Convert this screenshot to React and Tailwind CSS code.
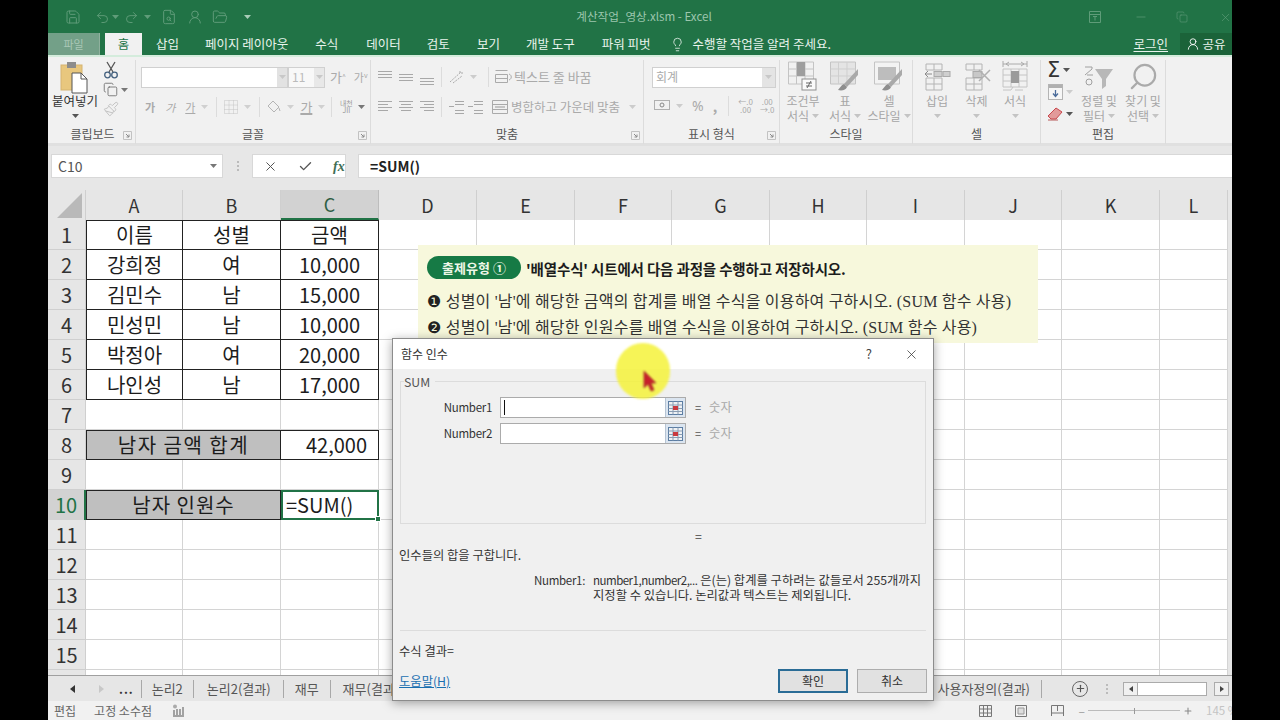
import { Save, Undo2, Redo2, FileSearch, FolderOpen, Lightbulb, UserRound, Minus, X, Check, Plus, Search, Copy, Paintbrush } from "lucide-react";

const KR = "font-['Noto_Sans_CJK_KR',sans-serif]";

const columns = ["A", "B", "C", "D", "E", "F", "G", "H", "I", "J", "K", "L"];
const rowNumbers = [1, 2, 3, 4, 5, 6, 7, 8, 9, 10, 11, 12, 13, 14, 15, 16];

const tableRows = {
	1: ["이름", "성별", "금액"],
	2: ["강희정", "여", "10,000"],
	3: ["김민수", "남", "15,000"],
	4: ["민성민", "남", "10,000"],
	5: ["박정아", "여", "20,000"],
	6: ["나인성", "남", "17,000"],
};

// Tiny dropdown triangle used all over the ribbon
function Caret({ color = "#9a9a9a", className = "" }) {
	return (
		<svg width="7" height="4" viewBox="0 0 7 4" className={className}>
			<path d="M0 0h7L3.5 4z" fill={color} />
		</svg>
	);
}

function Lines({ widths, gap = 4, color = "#a8a8a8" }) {
	return (
		<svg width="16" height="16" viewBox="0 0 16 16">
			{widths.map((w, i) => (
				<rect key={i} x={w[0]} y={w[2] ?? 2 + i * gap} width={w[1]} height="1" fill={color} />
			))}
		</svg>
	);
}

function Launcher() {
	return (
		<svg width="9" height="9" viewBox="0 0 9 9" className="absolute right-[3px] bottom-[4px]">
			<path d="M.5.5h8v8h-8z" fill="none" stroke="#c2c2c2" />
			<path d="M3 3l3 3M6 3.500V6H3.500" fill="none" stroke="#8a8a8a" />
		</svg>
	);
}

function Group({ width, label, children }) {
	return (
		<div className={`${width} relative flex flex-col shrink-0 border-r border-[#dcdcdc] h-[84px] mt-[3px]`}>
			<div className="flex-1 min-h-0">{children}</div>
			<div className="h-[16px] mb-[2px] text-center text-[12px] leading-[15px] text-[#555]">{label}</div>
		</div>
	);
}

function BigButton({ width, icon, top, bottom, caretOnly }) {
	return (
		<div className={`${width} flex flex-col items-center`}>
			<div className="h-[33px] flex items-center justify-center">{icon}</div>
			<div className="text-[12px] leading-[15px] text-[#a6a6a6] whitespace-nowrap">{top}</div>
			{caretOnly ? (
				<Caret className="mt-[6px]" color="#c4c4c4" />
			) : (
				<div className="text-[12px] leading-[15px] text-[#a6a6a6] whitespace-nowrap flex items-center gap-[3px]">
					{bottom}
					<Caret color="#c4c4c4" />
				</div>
			)}
		</div>
	);
}

function GridGlyph({ children }) {
	return (
		<svg width="30" height="32" viewBox="0 0 30 32">
			{children}
		</svg>
	);
}

function Ribbon() {
	const grey = "text-[#aaa]";
	return (
		<div className={`h-[88px] bg-[#f1f1f1] border-t-2 border-[#d4ecdc] flex pl-[2px] ${KR}`}>
			{/* Clipboard */}
			<Group width="w-[86px]" label="클립보드">
				<div className="flex">
					<div className="w-[50px] flex flex-col items-center">
						<svg width="30" height="32" viewBox="0 0 30 32" className="mt-[2px]">
							<rect x="1" y="3" width="21" height="25" fill="#e8c77e" stroke="#d5b470" />
							<rect x="7" y="0" width="9" height="6" fill="#8d8d8d" />
							<path d="M12 11h9l6 6v14H12z" fill="#fff" stroke="#555" />
							<path d="M21 11v6h6" fill="none" stroke="#555" />
						</svg>
						<div className="text-[12.5px] leading-[14px] text-[#333] whitespace-nowrap">붙여넣기</div>
						<Caret className="mt-[6px]" color="#555" />
					</div>
					<div className="flex flex-col items-start gap-[3px] ml-[3px] mt-[1px]">
						<svg width="16" height="18" viewBox="0 0 16 18">
							<path d="M4 1l6 10M12 1L6 11" fill="none" stroke="#555" strokeWidth="1.300" />
							<circle cx="4.500" cy="14" r="2.800" fill="none" stroke="#44617f" strokeWidth="1.300" />
							<circle cx="11.500" cy="14" r="2.800" fill="none" stroke="#44617f" strokeWidth="1.300" />
						</svg>
						<div className="flex items-center gap-[3px]">
							<Copy size={15} strokeWidth={1.3} color="#666" />
							<Caret color="#777" />
						</div>
						<Paintbrush size={16} strokeWidth={1.5} color="#c4c4c4" className="mt-[1px]" />
					</div>
				</div>
				<Launcher />
			</Group>

			{/* Font */}
			<Group width="w-[235px]" label="글꼴">
				<div className="flex items-center pl-[5px] pt-[5px] h-[29px]">
					<div className="w-[147px] h-[21px] bg-white border border-[#d0d0d0] flex justify-end">
						<div className="w-[10px] bg-[#e2e2e2] flex items-center justify-center">
							<Caret color="#c8c8c8" />
						</div>
					</div>
					<div className="w-[37px] h-[21px] bg-[#f8f8f8] border border-[#d0d0d0] flex items-center justify-between pl-[3px] text-[12px] text-[#bbb]">
						11
						<div className="w-[10px] h-full bg-[#e8e8e8] flex items-center justify-center">
							<Caret color="#c8c8c8" />
						</div>
					</div>
					<span className={`ml-[5px] text-[13px] ${grey}`}>가<sup className="text-[7px]">^</sup></span>
					<span className={`ml-[8px] text-[11px] ${grey}`}>가<sup className="text-[7px]">v</sup></span>
				</div>
				<div className={`flex items-center pl-[9px] pt-[8px] text-[11px] ${grey}`}>
					<span className="font-bold">가</span>
					<span className="ml-[10px] italic">가</span>
					<span className="ml-[10px] underline">가</span>
					<Caret className="ml-[6px]" color="#d0d0d0" />
					<div className="w-px h-[20px] bg-[#dcdcdc] ml-[8px]" />
					<svg width="14" height="14" viewBox="0 0 14 14" className="ml-[7px]">
						<path d="M.5.5h13v13H.5zM5 .5v13M9.500.5v13M.5 5h13M.5 9.500h13" fill="none" stroke="#c4c4c4" strokeDasharray="1 1" />
					</svg>
					<Caret className="ml-[6px]" color="#d0d0d0" />
					<div className="w-px h-[20px] bg-[#dcdcdc] ml-[8px]" />
					<svg width="16" height="16" viewBox="0 0 16 16" className="ml-[6px]">
						<path d="M7 2l6 6-5 5-6-6zM13 9l1 3" fill="none" stroke="#b4b4b4" />
					</svg>
					<Caret className="ml-[5px]" color="#d0d0d0" />
					<span className="ml-[6px] underline decoration-2 text-[13px]">가</span>
					<Caret className="ml-[6px]" color="#d0d0d0" />
					<div className="w-px h-[20px] bg-[#dcdcdc] ml-[6px]" />
					<span className="ml-[7px] text-[7px] leading-[7px] w-[14px] text-center text-[#999]">내천 JII</span>
					<Caret className="ml-[5px]" color="#777" />
				</div>
				<Launcher />
			</Group>

			{/* Alignment */}
			<Group width="w-[273px]" label="맞춤">
				<div className="flex items-center pl-[6px] pt-[5px] h-[29px]">
					<div className="flex gap-[5px]">
						<Lines widths={[[1, 14], [1, 14], [1, 14]]} gap={3} />
						<Lines widths={[[1, 14, 5], [1, 14, 8], [1, 14, 11]]} />
						<Lines widths={[[1, 14, 9], [1, 14, 12], [1, 14, 15]]} />
					</div>
					<div className="w-px h-[20px] bg-[#dcdcdc] ml-[6px]" />
					<svg width="20" height="16" viewBox="0 0 20 16" className="ml-[6px]">
						<path d="M2 13L13 3M11 3h3v3M5 14l9-7" fill="none" stroke="#aaa" strokeDasharray="2 1" />
					</svg>
					<Caret className="ml-[2px]" color="#ccc" />
					<div className="w-px h-[20px] bg-[#dcdcdc] ml-[11px]" />
					<svg width="18" height="17" viewBox="0 0 18 17" className="ml-[6px]">
						<path d="M.5 1.500h12M.5 5.500h12v8H.5zM.5 9.500h12" fill="none" stroke="#aaa" />
						<path d="M14 5c3 1 3 5 0 6" fill="none" stroke="#aaa" />
					</svg>
					<span className={`ml-[1px] text-[13px] whitespace-nowrap ${grey}`}>텍스트 줄 바꿈</span>
				</div>
				<div className="flex items-center pl-[6px] pt-[8px]">
					<div className="flex gap-[5px]">
						<Lines widths={[[1, 14], [1, 10], [1, 14], [1, 10]]} gap={3} />
						<Lines widths={[[1, 14], [3, 10], [1, 14], [3, 10]]} gap={3} />
						<Lines widths={[[1, 14], [5, 10], [1, 14], [5, 10]]} gap={3} />
					</div>
					<div className="w-px h-[20px] bg-[#dcdcdc] ml-[6px]" />
					<div className="flex gap-[3px] ml-[6px]">
						<Lines widths={[[7, 9], [7, 9], [1, 5, 7], [7, 9], [7, 9]]} gap={3} />
						<Lines widths={[[7, 9], [7, 9], [1, 5, 7], [7, 9], [7, 9]]} gap={3} />
					</div>
					<svg width="16" height="16" viewBox="0 0 16 16" className="ml-[9px]">
						<path d="M.5 1.500h15v13H.5zM.5 5.500h15M.5 10.500h15" fill="none" stroke="#aaa" />
						<path d="M3 8h10" stroke="#999" />
					</svg>
					<span className={`ml-[3px] text-[12.5px] whitespace-nowrap ${grey}`}>병합하고 가운데 맞춤</span>
					<Caret className="ml-[9px]" color="#ccc" />
				</div>
				<Launcher />
			</Group>

			{/* Number */}
			<Group width="w-[136px]" label="표시 형식">
				<div className="flex items-center pl-[8px] pt-[5px] h-[29px]">
					<div className="w-[124px] h-[21px] bg-white border border-[#d0d0d0] flex items-center justify-between pl-[3px] text-[12px] text-[#aaa]">
						회계
						<div className="w-[13px] h-full bg-[#e4e4e4] flex items-center justify-center">
							<Caret color="#c8c8c8" />
						</div>
					</div>
				</div>
				<div className="flex items-center pl-[10px] pt-[7px] text-[#aaa]">
					<svg width="16" height="13" viewBox="0 0 16 13">
						<rect x=".5" y=".5" width="15" height="9" fill="none" stroke="#b0b0b0" />
						<circle cx="8" cy="5" r="2" fill="none" stroke="#888" />
					</svg>
					<Caret className="ml-[6px]" color="#ccc" />
					<span className="ml-[9px] text-[14px] leading-[18px] font-['Noto_Sans',sans-serif]">%</span>
					<span className="ml-[9px] text-[14px] leading-[14px] font-bold">,</span>
					<div className="w-px h-[20px] bg-[#dcdcdc] ml-[11px]" />
					<span className="ml-[9px] text-[8px] leading-[8px] text-center whitespace-pre">{"←.0\n.00"}</span>
					<span className="ml-[7px] text-[8px] leading-[8px] text-center whitespace-pre">{".00\n→.0"}</span>
				</div>
				<Launcher />
			</Group>

			{/* Styles */}
			<Group width="w-[133px]" label="스타일">
				<div className="flex pl-[2px]">
					<BigButton
						width="w-[42px]"
						top="조건부"
						bottom="서식"
						icon={
							<GridGlyph>
								<path d="M.5 1h25v22H.5zM8.500 1v22M17 1v22M.5 8h25M.5 15h25" fill="none" stroke="#c4c4c4" />
								<rect x="9" y="1" width="8" height="14" fill="#9e9e9e" />
								<rect x="14" y="18" width="14" height="11" fill="#fafafa" stroke="#8f8f8f" />
								<path d="M18 22h6M18 25h6M23 20l-4 7" stroke="#666" fill="none" />
							</GridGlyph>
						}
					/>
					<BigButton
						width="w-[42px]"
						top="표"
						bottom="서식"
						icon={
							<GridGlyph>
								<path d="M.5 1h25v22H.5z" fill="#e4e4e4" stroke="#c4c4c4" />
								<path d="M.5 8h25M.5 15h25M8.500 1v22M17 1v22" stroke="#cfcfcf" />
								<path d="M28 8L14 23l3 3 11-12z" fill="#a9a9a9" />
								<path d="M14 23c-3 1-4 4-6 6 4 1 8 0 9-3z" fill="#8e8e8e" />
							</GridGlyph>
						}
					/>
					<BigButton
						width="w-[46px]"
						top="셀"
						bottom="스타일"
						icon={
							<GridGlyph>
								<path d="M.5 1h25v22H.5z" fill="#f3f3f3" stroke="#c4c4c4" />
								<rect x="4" y="6" width="18" height="13" fill="#bdbdbd" />
								<path d="M28 8L14 23l3 3 11-12z" fill="#a9a9a9" />
								<path d="M14 23c-3 1-4 4-6 6 4 1 8 0 9-3z" fill="#8e8e8e" />
							</GridGlyph>
						}
					/>
				</div>
			</Group>

			{/* Cells */}
			<Group width="w-[128px]" label="셀">
				<div className="flex pl-[4px]">
					<BigButton
						width="w-[40px]"
						top="삽입"
						caretOnly
						icon={
							<GridGlyph>
								<path d="M4 3h16v6H4zM12 3v6M4 17h16v12H4zM12 17v12M4 23h16" fill="none" stroke="#b4b4b4" />
								<path d="M3 13h7M6 10l-3 3 3 3" fill="none" stroke="#8a8a8a" />
								<rect x="12" y="10.500" width="8" height="5" fill="#cfcfcf" stroke="#aaa" />
								<rect x="21" y="10.500" width="7" height="5" fill="#cfcfcf" stroke="#aaa" />
							</GridGlyph>
						}
					/>
					<BigButton
						width="w-[39px]"
						top="삭제"
						caretOnly
						icon={
							<GridGlyph>
								<path d="M4 3h16v6H4zM12 3v6M4 17h16v12H4zM12 17v12M4 23h16" fill="none" stroke="#b4b4b4" />
								<rect x="11" y="10.500" width="9" height="6" fill="#c8c8c8" stroke="#aaa" />
								<path d="M17 9l11 11M28 9L17 20" stroke="#b0b0b0" strokeWidth="1.500" />
							</GridGlyph>
						}
					/>
					<BigButton
						width="w-[38px]"
						top="서식"
						caretOnly
						icon={
							<GridGlyph>
								<path d="M3 8h24v18H3zM11 8v18M19 8v18M3 14h24M3 20h24" fill="none" stroke="#c4c4c4" />
								<rect x="11" y="10" width="8" height="12" fill="#9a9a9a" />
								<path d="M3 3h24M3 0v6M27 0v6M6 3l3-2M6 3l3 2M24 3l-3-2M24 3l-3 2" fill="none" stroke="#aaa" />
								<path d="M3 29h8l2-3M15 29h8" fill="none" stroke="#c4c4c4" />
							</GridGlyph>
						}
					/>
				</div>
			</Group>

			{/* Editing */}
			<Group width="w-[125px]" label="편집">
				<div className="flex pl-[6px]">
					<div className="w-[30px] flex flex-col items-start">
						<div className="flex items-center h-[20px]">
							<span className="text-[21px] leading-[20px] text-[#333] font-['DejaVu_Sans',sans-serif]">Σ</span>
							<Caret className="ml-[3px]" color="#555" />
						</div>
						<div className="flex items-center h-[21px] mt-[1px] ml-[1px]">
							<svg width="15" height="16" viewBox="0 0 15 16">
								<rect x=".5" y=".5" width="14" height="15" fill="#f6f6f6" stroke="#b4b4b4" />
								<rect x="1" y="1" width="13" height="3" fill="#b0b0b0" />
								<path d="M7.500 6v6M5 9.500l2.500 3 2.500-3" fill="none" stroke="#4a6b9a" strokeWidth="1.300" />
							</svg>
							<Caret className="ml-[3px]" color="#ccc" />
						</div>
						<div className="flex items-center h-[21px] mt-[1px]">
							<svg width="17" height="15" viewBox="0 0 17 15">
								<path d="M1 10L9 2l6 4-6 7H4z" fill="#e29a9a" stroke="#c9474d" />
								<path d="M1 14h10" stroke="#b85a5a" />
							</svg>
							<Caret className="ml-[2px]" color="#555" />
						</div>
					</div>
					<BigButton
						width="w-[44px]"
						top="정렬 및"
						bottom="필터"
						icon={
							<svg width="32" height="26" viewBox="0 0 32 26">
								<path d="M2 3h7v2L2 11M4 11h6" fill="none" stroke="#a0a0a0" />
								<circle cx="6" cy="18" r="3" fill="none" stroke="#a0a0a0" />
								<path d="M12 5h18l-7 10v7l-4 3V15z" fill="#b8b8b8" />
							</svg>
						}
					/>
					<BigButton
						width="w-[44px]"
						top="찾기 및"
						bottom="선택"
						icon={<Search size={31} strokeWidth={1.7} color="#aaa" className="-scale-x-100" />}
					/>
				</div>
			</Group>
			<div className="flex-1" />
		</div>
	);
}

function TopBars() {
	const qa = "#5f9c79";
	return (
		<>
			{/* Title bar */}
			<div className={`h-[33px] bg-[#217346] flex items-center pl-[17px] pt-[1px] ${KR}`}>
				<Save size={16} color={qa} strokeWidth={1.5} />
				<Undo2 size={15} color={qa} strokeWidth={1.5} className="ml-[14px]" />
				<Caret color={qa} className="ml-[2px]" />
				<Redo2 size={15} color={qa} strokeWidth={1.5} className="ml-[5px]" />
				<Caret color={qa} className="ml-[5px]" />
				<FileSearch size={16} color={qa} strokeWidth={1.5} className="ml-[10px]" />
				<UserRound size={16} color={qa} strokeWidth={1.5} className="ml-[10px]" />
				<FolderOpen size={16} color={qa} strokeWidth={1.5} className="ml-[9px]" />
				<Caret color="#a9cdb8" className="ml-[16px]" />
				<div className="flex-1 text-center text-[11.6px] text-[#9cc6ad] pr-[52px] whitespace-nowrap">계산작업_영상.xlsm - Excel</div>
				<svg width="12" height="12" viewBox="0 0 12 12" className="mr-[33px]">
					<path d="M.5.5h11v11H.5zM.5 3.500h11M4 5.500h4M6 5.500v4" fill="none" stroke={qa} />
				</svg>
				<Minus size={14} color={qa} strokeWidth={1.2} className="mr-[28px]" />
				<Copy size={12} color={qa} strokeWidth={1.2} className="mr-[31px]" />
				<X size={13} color={qa} strokeWidth={1.2} />
			</div>

			{/* Tabs */}
			<div className={`h-[22px] bg-[#217346] flex items-end text-[12.5px] text-[#e9f3ed] whitespace-nowrap ${KR}`}>
				<div className="w-[52px] h-full bg-[#73a088] flex items-center justify-center text-[#a9c7b6] text-[11px] border-r border-[#8fb09d]">파일</div>
				<div className="ml-[5px] w-[37px] h-full bg-[#f1f1f1] flex items-center justify-center text-[#217346]">홈</div>
				<div className="h-full flex items-center">
					<span className="ml-[14px]">삽입</span>
					<span className="ml-[26px]">페이지 레이아웃</span>
					<span className="ml-[27px]">수식</span>
					<span className="ml-[28px]">데이터</span>
					<span className="ml-[26px]">검토</span>
					<span className="ml-[27px]">보기</span>
					<span className="ml-[26px]">개발 도구</span>
					<span className="ml-[27px]">파워 피벗</span>
					<Lightbulb size={15} strokeWidth={1.3} color="#e9f3ed" className="ml-[19px]" />
					<span className="ml-[8px]">수행할 작업을 알려 주세요.</span>
				</div>
				<div className="flex-1" />
				<div className="h-full flex items-center underline underline-offset-2 mr-[12px]">로그인</div>
				<div className="w-[52px] h-full bg-[#1b6339] flex items-center justify-center gap-[2px]">
					<UserRound size={14} strokeWidth={1.5} color="#fff" />
					<span>공유</span>
				</div>
			</div>
		</>
	);
}

function FormulaBar() {
	return (
		<div className={`h-[47px] bg-[#e7e7e7] border-t-[3px] border-[#e0e0e0] flex items-start pl-[3px] pt-[8px] ${KR}`}>
			<div className="w-[172px] h-[24px] bg-white border border-[#d8d8d8] flex items-center justify-between pl-[6px] pr-[5px] text-[14px] text-[#555]">
				C10
				<Caret color="#777" />
			</div>
			<div className="w-[29px] h-[24px] flex flex-col items-center justify-center gap-[2px]">
				<i className="block w-[2px] h-[2px] bg-[#bbb]" />
				<i className="block w-[2px] h-[2px] bg-[#bbb]" />
				<i className="block w-[2px] h-[2px] bg-[#bbb]" />
			</div>
			<div className="w-[94px] h-[24px] bg-white border border-[#d8d8d8] flex items-center pl-[10px]">
				<X size={15} color="#555" strokeWidth={1.6} />
				<Check size={15} color="#555" strokeWidth={2.2} className="ml-[20px]" />
				<span className="ml-[20px] text-[14px] font-bold italic text-[#3f6e55] font-['Liberation_Serif',serif]">fx</span>
			</div>
			<div className="ml-[12px] flex-1 h-[24px] bg-white border-y border-l border-[#d8d8d8] flex items-center pl-[11px] text-[14px] font-bold text-[#222]">
				=SUM()
			</div>
		</div>
	);
}

function SheetGrid() {
	const gridTemplate =
		"grid grid-cols-[38px_97px_98px_98px_98px_98px_97px_98px_97px_98px_97px_98px_68px] auto-rows-[30px]";
	const gridCell = "border-r border-b border-[#d4d4d4]";
	const black = "border-r border-b border-[#222]";

	return (
		<div className={`h-[485px] overflow-hidden flex ${KR}`}>
			<div className="w-[1180px] bg-white">
				<div className={`${gridTemplate} h-[30px]`}>
					<div className="bg-[#e6e6e6] border-r border-[#cfcfcf] flex items-end justify-end pr-[3px] pb-[2px]">
						<svg width="25" height="25" viewBox="0 0 25 25">
							<path d="M25 0v25H0z" fill="#b9b9b9" />
						</svg>
					</div>
					{columns.map((c) => (
						<div
							key={c}
							className={
								c === "C"
									? "bg-[#d2d2d2] border-r border-b-2 border-r-[#bdbdbd] border-b-[#217346] flex items-center justify-center text-[18px] text-[#2f5f45]"
									: "bg-[#e6e6e6] border-r border-[#cfcfcf] flex items-center justify-center text-[18px] text-[#333]"
							}
						>
							{c}
						</div>
					))}
				</div>
				<div className={gridTemplate}>
					{rowNumbers.map((n) => {
						const data = tableRows[n];
						const head =
							n === 10
								? "bg-[#d2d2d2] text-[#217346] border-r-2 border-[#217346]"
								: "bg-[#e6e6e6] text-[#333] border-r border-b border-[#cfcfcf]";
						return (
							<div key={n} className="contents">
								<div className={`${head} flex items-center justify-center text-[20px]`}>{n}</div>
								{data &&
									data.map((v, i) => (
										<div
											key={i}
											className={`${black} ${i === 0 ? "border-l" : ""} ${n === 1 ? "border-t" : ""} flex items-center ${
												i === 2 && n > 1 ? "justify-end pr-[18px]" : "justify-center"
											} text-[20px] text-[#1c1c1c]`}
										>
											{v}
										</div>
									))}
								{n === 8 && (
									<>
										<div className="col-span-2 bg-[#bfbfbf] border border-[#222] flex items-center justify-center text-[20px] tracking-[1.5px] text-[#1c1c1c]">
											남자 금액 합계
										</div>
										<div className="border-y border-r border-[#222] flex items-center justify-end pr-[11px] text-[20px] text-[#1c1c1c]">
											42,000
										</div>
									</>
								)}
								{n === 10 && (
									<>
										<div className="col-span-2 bg-[#bfbfbf] border border-[#222] flex items-center justify-center text-[20px] tracking-[1px] text-[#1c1c1c]">
											남자 인원수
										</div>
										<div className="relative z-10 border-2 border-[#217346] flex items-center pl-[3px] text-[20px] text-[#1c1c1c]">
											=SUM()
											<i className="absolute -right-[4px] -bottom-[4px] w-[6px] h-[6px] bg-[#217346] border border-white" />
										</div>
									</>
								)}
								{!data && n !== 8 && n !== 10 && (
									<>
										<div className={gridCell} />
										<div className={gridCell} />
										<div className={gridCell} />
									</>
								)}
								{columns.slice(3).map((c) => (
									<div key={c} className={gridCell} />
								))}
							</div>
						);
					})}
				</div>
			</div>
			<div className="flex-1 bg-[#e6e6e6]" />
		</div>
	);
}

function SheetTabs() {
	const sep = <div className="w-px h-[18px] bg-[#a8a8a8]" />;
	return (
		<div className={`h-[26px] bg-[#e6e6e6] border-t border-[#a0a0a0] flex items-center text-[13px] text-[#555] whitespace-nowrap ${KR}`}>
			<svg width="6" height="8" viewBox="0 0 6 8" className="ml-[22px]">
				<path d="M5 0v8L0 4z" fill="#333" />
			</svg>
			<svg width="6" height="8" viewBox="0 0 6 8" className="ml-[23px]">
				<path d="M0 0v8l5-4z" fill="#c8c8c8" />
			</svg>
			<span className="ml-[14px] font-bold text-[#333] text-[12px] leading-[12px] tracking-[1px]">...</span>
			<div className="ml-[7px]">{sep}</div>
			<span className="ml-[10px]">논리2</span>
			<div className="ml-[10px]">{sep}</div>
			<span className="ml-[13px]">논리2(결과)</span>
			<div className="ml-[12px]">{sep}</div>
			<span className="ml-[11px]">재무</span>
			<div className="ml-[11px]">{sep}</div>
			<span className="ml-[12px]">재무(결과)</span>
			<div className="flex-1 flex justify-end items-center">
				<span>사용자정의(결과)</span>
			</div>
			<div className="ml-[11px]">{sep}</div>
			<div className="ml-[30px] w-[16px] h-[16px] rounded-full border border-[#666] flex items-center justify-center">
				<Plus size={11} color="#555" strokeWidth={2.5} />
			</div>
			<div className="ml-[18px] flex flex-col gap-[2px]">
				<i className="block w-[2px] h-[2px] bg-[#bbb]" />
				<i className="block w-[2px] h-[2px] bg-[#bbb]" />
				<i className="block w-[2px] h-[2px] bg-[#bbb]" />
			</div>
			<div className="ml-[15px] w-[84px] h-[14px] bg-white border border-[#ababab] flex">
				<div className="w-[14px] h-full border-r border-[#ababab] flex items-center justify-center bg-[#f0f0f0]">
					<svg width="4" height="6" viewBox="0 0 4 6">
						<path d="M4 0v6L0 3z" fill="#444" />
					</svg>
				</div>
			</div>
			<div className="ml-[7px] w-[15px] h-[14px] border border-[#ababab] bg-[#f0f0f0] flex items-center justify-center">
				<svg width="4" height="6" viewBox="0 0 4 6">
					<path d="M0 0v6l4-3z" fill="#444" />
				</svg>
			</div>
			<div className="w-[3px]" />
		</div>
	);
}

function StatusBar() {
	return (
		<div className={`h-[19px] bg-[#f1f1f1] flex items-center text-[12px] text-[#666] whitespace-nowrap ${KR}`}>
			<span className="ml-[6px]">편집</span>
			<span className="ml-[18px]">고정 소수점</span>
			<svg width="13" height="13" viewBox="0 0 13 13" className="ml-[20px]">
				<path d="M1 12h11M2 6v5M5 5v6M8 5v6M11 3v8" stroke="#888" strokeWidth="1.500" fill="none" />
				<circle cx="3" cy="2.500" r="2" fill="#aaa" />
			</svg>
			<div className="flex-1" />
			<svg width="13" height="12" viewBox="0 0 13 12">
				<path d="M.5.5h12v11H.5zM4.500.5v11M8.500.5v11M.5 4h12M.5 8h12" fill="none" stroke="#777" />
			</svg>
			<svg width="12" height="12" viewBox="0 0 12 12" className="ml-[23px]">
				<path d="M.5.5h11v11H.5z" fill="none" stroke="#777" />
				<path d="M3 3h6v6H3z" fill="#ddd" stroke="#999" />
			</svg>
			<svg width="13" height="12" viewBox="0 0 13 12" className="ml-[24px]">
				<path d="M.5 11V.5h12V11M.5 8h12M6.500 1v5" fill="none" stroke="#777" />
			</svg>
			<span className="ml-[15px] text-[#999]">–</span>
			<div className="ml-[3px] w-[92px] h-px bg-[#bbb] flex justify-center items-center">
				<i className="block w-px h-[6px] bg-[#999]" />
			</div>
			<Plus size={10} color="#888" strokeWidth={2.5} className="ml-[3px]" />
			<span className="ml-[13px] w-[26px] overflow-hidden text-[11.5px] text-[#c4c4c4]">145 %</span>
		</div>
	);
}

// Picture pasted on the sheet
function QuestionPicture() {
	return (
		<div className="absolute left-[370px] top-[245px] w-[620px] h-[98px] bg-[#f7f8dc] pl-[9px] pt-[11px] text-[#333] whitespace-nowrap font-['Liberation_Serif','Noto_Sans_CJK_KR',sans-serif]">
			<div className="flex items-center h-[23px]">
				<div className={`w-[94px] h-[23px] rounded-full bg-[#167a45] flex items-center justify-center text-[13px] font-bold text-[#eef7e8] ${KR}`}>
					출제유형 ①
				</div>
				<span className={`ml-[5px] pt-[3px] text-[14.5px] font-bold tracking-[-0.15px] text-[#1c1c1c] ${KR}`}>
					'배열수식' 시트에서 다음 과정을 수행하고 저장하시오.
				</span>
			</div>
			<div className="mt-[12px] text-[16px] leading-[22px] tracking-[0.2px]">
				<span className="font-['DejaVu_Sans',sans-serif] text-[#222]">❶</span> 성별이 '남'에 해당한 금액의 합계를 배열 수식을 이용하여 구하시오. (SUM 함수 사용)
			</div>
			<div className="mt-[4px] text-[16px] leading-[22px] tracking-[0.2px]">
				<span className="font-['DejaVu_Sans',sans-serif] text-[#222]">❷</span> 성별이 '남'에 해당한 인원수를 배열 수식을 이용하여 구하시오. (SUM 함수 사용)
			</div>
		</div>
	);
}

function ArgRow({ name, caret }) {
	return (
		<div className="flex items-center h-[21px]">
			<div className="w-[91px] text-right text-[11.5px] tracking-[-0.3px] text-[#333]">{name}</div>
			<div className="ml-[8px] w-[186px] h-[21px] bg-white border border-[#ababab] flex items-center justify-between">
				<div className="pl-[3px]">{caret && <i className="block w-px h-[15px] bg-[#111]" />}</div>
				<div className="w-[20px] h-full bg-[#dbe5f0] border-l border-[#b6c4d4] flex items-center justify-center">
					<svg width="15" height="14" viewBox="0 0 15 14">
						<rect x=".5" y=".5" width="14" height="13" fill="#eef1f4" stroke="#5b7da3" />
						<path d="M.5 4h14M.5 7.500h14M.5 10.500h14M5 .5v13M10 .5v13" stroke="#8a9db3" />
						<rect x="5" y="5" width="5" height="4" fill="#c9393f" />
					</svg>
				</div>
			</div>
			<span className="ml-[9px] text-[11px] text-[#555]">=</span>
			<span className="ml-[8px] text-[#a8a8a8]">숫자</span>
		</div>
	);
}

function FunctionDialog() {
	return (
		<div className={`absolute left-[344px] top-[338px] w-[542px] h-[363px] bg-[#f0f0f0] border border-[#8c8c8c] shadow-[0_2px_10px_rgba(0,0,0,0.35)] flex flex-col text-[12.3px] text-[#333] ${KR}`}>
			<div className="h-[30px] bg-white flex items-center pl-[8px] shrink-0">
				<span className="text-[12px] text-[#333]">함수 인수</span>
				<div className="flex-1" />
				<span className="text-[13px] text-[#444]">?</span>
				<X size={15} strokeWidth={1.2} color="#333" className="ml-[32px] mr-[14px]" />
			</div>
			<div className="relative mx-[7px] mt-[12px] h-[143px] border border-[#dcdcdc] pt-[15px] shrink-0">
				<span className="absolute -top-[9px] left-[3px] bg-[#f0f0f0] pr-[5px] text-[#555]">SUM</span>
				<ArgRow name="Number1" caret />
				<div className="mt-[5px]">
					<ArgRow name="Number2" />
				</div>
			</div>
			<div className="h-[15px] mt-[6px] pl-[302px] leading-[15px] text-[#444]">=</div>
			<div className="pl-[6px] mt-[2px] leading-[16px]">인수들의 합을 구합니다.</div>
			<div className="flex mt-[10px] pl-[141px] leading-[15px]">
				<span className="w-[59px] shrink-0 text-[11.5px] tracking-[-0.3px]">Number1:</span>
				<span className="whitespace-nowrap">
					<span className="text-[11.5px] tracking-[-0.5px]">number1,number2,...</span> 은(는) 합계를 구하려는 값들로서 255개까지
					<br />
					지정할 수 있습니다. 논리값과 텍스트는 제외됩니다.
				</span>
			</div>
			<div className="mx-[7px] mt-[27px] border-t border-[#dcdcdc]" />
			<div className="pl-[6px] mt-[12px] leading-[16px]">수식 결과=</div>
			<div className="flex items-center pl-[6px] pr-[6px] mt-[10px]">
				<span className="text-[#1a6fb0] underline">도움말(H)</span>
				<div className="flex-1" />
				<div className="w-[70px] h-[24px] bg-[#e1e1e1] border-2 border-[#2a6c96] flex items-center justify-center text-[12px]">확인</div>
				<div className="ml-[9px] w-[70px] h-[24px] bg-[#e1e1e1] border border-[#adadad] flex items-center justify-center text-[12px]">취소</div>
			</div>
		</div>
	);
}

function PointerHalo() {
	return (
		<div className="absolute left-[568px] top-[343px] w-[54px] h-[56px] rounded-full bg-[#f5f23a]/85 blur-[1px] flex">
			<svg width="14" height="22" viewBox="0 0 14 22" className="ml-[27px] mt-[27px]">
				<path d="M1 1v17l4-4 3 7 3-1-3-7h5z" fill="#c8202a" stroke="#8c1a20" strokeWidth=".6" />
			</svg>
		</div>
	);
}

export default function App() {
	return (
		<div className="w-[1280px] h-[720px] bg-black flex overflow-hidden">
			<div className="w-[48px] shrink-0" />
			<div className="w-[1184px] shrink-0 flex flex-col relative bg-white overflow-hidden">
				<TopBars />
				<Ribbon />
				<FormulaBar />
				<SheetGrid />
				<SheetTabs />
				<StatusBar />
				<QuestionPicture />
				<FunctionDialog />
				<PointerHalo />
			</div>
			<div className="w-[48px] shrink-0" />
		</div>
	);
}
